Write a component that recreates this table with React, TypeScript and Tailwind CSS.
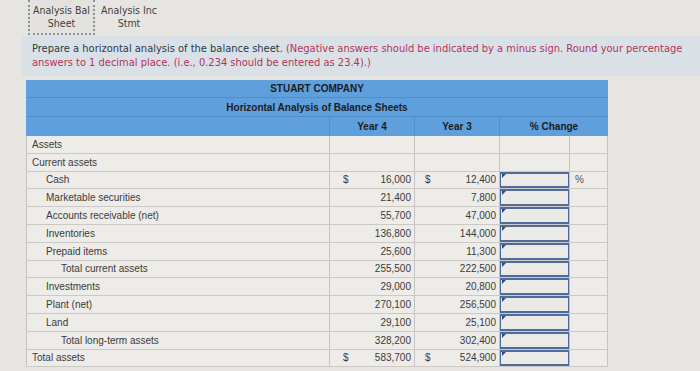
import React from 'react';

type Row = {
  label: string;
  indent: number;
  y4?: string;
  y3?: string;
  dollar?: boolean;
  pct?: boolean;
};

const rows: Row[] = [
  { label: 'Assets', indent: 0 },
  { label: 'Current assets', indent: 0 },
  { label: 'Cash', indent: 1, y4: '16,000', y3: '12,400', dollar: true, pct: true },
  { label: 'Marketable securities', indent: 1, y4: '21,400', y3: '7,800' },
  { label: 'Accounts receivable (net)', indent: 1, y4: '55,700', y3: '47,000' },
  { label: 'Inventories', indent: 1, y4: '136,800', y3: '144,000' },
  { label: 'Prepaid items', indent: 1, y4: '25,600', y3: '11,300' },
  { label: 'Total current assets', indent: 2, y4: '255,500', y3: '222,500' },
  { label: 'Investments', indent: 1, y4: '29,000', y3: '20,800' },
  { label: 'Plant (net)', indent: 1, y4: '270,100', y3: '256,500' },
  { label: 'Land', indent: 1, y4: '29,100', y3: '25,100' },
  { label: 'Total long-term assets', indent: 2, y4: '328,200', y3: '302,400' },
  { label: 'Total assets', indent: 0, y4: '583,700', y3: '524,900', dollar: true },
];

const indentClass = ['pl-[5px]', 'pl-[19px]', 'pl-[34px]'];

function AnswerBox() {
  return (
    <div className="relative h-full w-full border-x border-[#4a6796] border-y-2 border-y-[#4f6c9a] bg-[#eceae6]">
      <span className="absolute left-[1px] top-0 h-0 w-0 border-l-[4px] border-b-[4px] border-l-[#2a4a80] border-b-transparent" />
    </div>
  );
}

export default function App() {
  return (
    <div className="w-[700px] h-[371px] overflow-hidden bg-[#e7e5e2] text-[#2b2b2b]" style={{ fontFamily: '"Liberation Sans", Arial, sans-serif' }}>
      {/* tabs */}
      <div className="flex h-[35px] pl-[28px] items-stretch" style={{ fontFamily: '"DejaVu Sans Condensed", "DejaVu Sans", sans-serif' }}>
        <div className="w-[67px] border-2 border-t-0 border-dotted border-[#8a8fa0] bg-[#e4e2df] flex flex-col items-center pt-[4px] text-[10.5px] leading-[13px] text-[#404040]">
          <span>Analysis Bal</span>
          <span>Sheet</span>
        </div>
        <div className="w-[68px] flex flex-col items-center pt-[4px] text-[10.5px] leading-[13px] text-[#404040]">
          <span>Analysis Inc</span>
          <span>Stmt</span>
        </div>
      </div>

      {/* instructions */}
      <div
        className="ml-[22px] mt-[1px] h-[40px] bg-[#d9e1e7] pl-[10px] pt-[6px] text-[11px] leading-[14px] whitespace-nowrap"
        style={{ fontFamily: '"DejaVu Sans Condensed", "DejaVu Sans", sans-serif' }}
      >
        <span className="text-[#2d3848]">Prepare a horizontal analysis of the balance sheet. </span>
        <span className="text-[#b3325a]">
          (Negative answers should be indicated by a minus sign. Round your percentage
          <br />
          answers to 1 decimal place. (i.e., 0.234 should be entered as 23.4).)
        </span>
      </div>

      {/* table */}
      <div className="ml-[26px] mt-[4px] w-[582px] text-[10px]">
        <div className="bg-[#5f9fdc] text-[#1c1c1c] font-bold">
          <div className="h-[18px] flex items-center justify-center border-b border-[#4f8dcb]">STUART COMPANY</div>
          <div className="h-[19px] flex items-center justify-center border-b border-[#4f8dcb]">Horizontal Analysis of Balance Sheets</div>
          <div className="h-[19px] flex">
            <div className="w-[304px] border-r border-[#4f8dcb]" />
            <div className="w-[85px] border-r border-[#4f8dcb] flex items-center justify-center">Year 4</div>
            <div className="w-[85px] border-r border-[#4f8dcb] flex items-center justify-center">Year 3</div>
            <div className="flex-1 flex items-center justify-center">% Change</div>
          </div>
        </div>

        <div className="bg-[#eeece8] border-l border-r border-[#c6c4c0] text-[#3a3a3a]">
          {rows.map((r) => (
            <div key={r.label} className="h-[17.8px] flex border-b border-[#cbc9c5]">
              <div className={`w-[303px] flex items-center border-r border-[#c6c4c0] ${indentClass[r.indent]}`}>{r.label}</div>
              <div className="w-[85px] flex items-center justify-between border-r border-[#c6c4c0] pl-[13px] pr-[3px]">
                <span>{r.dollar ? '$' : ''}</span>
                <span>{r.y4 ?? ''}</span>
              </div>
              <div className="w-[85px] flex items-center justify-between pl-[10px] pr-[3px] border-r border-[#c6c4c0]">
                <span>{r.dollar ? '$' : ''}</span>
                <span>{r.y3 ?? ''}</span>
              </div>
              <div className="w-[70px] border-r border-[#c6c4c0]">{r.y3 ? <AnswerBox /> : null}</div>
              <div className="flex-1 flex items-center pl-[5px] text-[#555]">{r.pct ? '%' : ''}</div>
            </div>
          ))}
        </div>
      </div>
    </div>
  );
}
